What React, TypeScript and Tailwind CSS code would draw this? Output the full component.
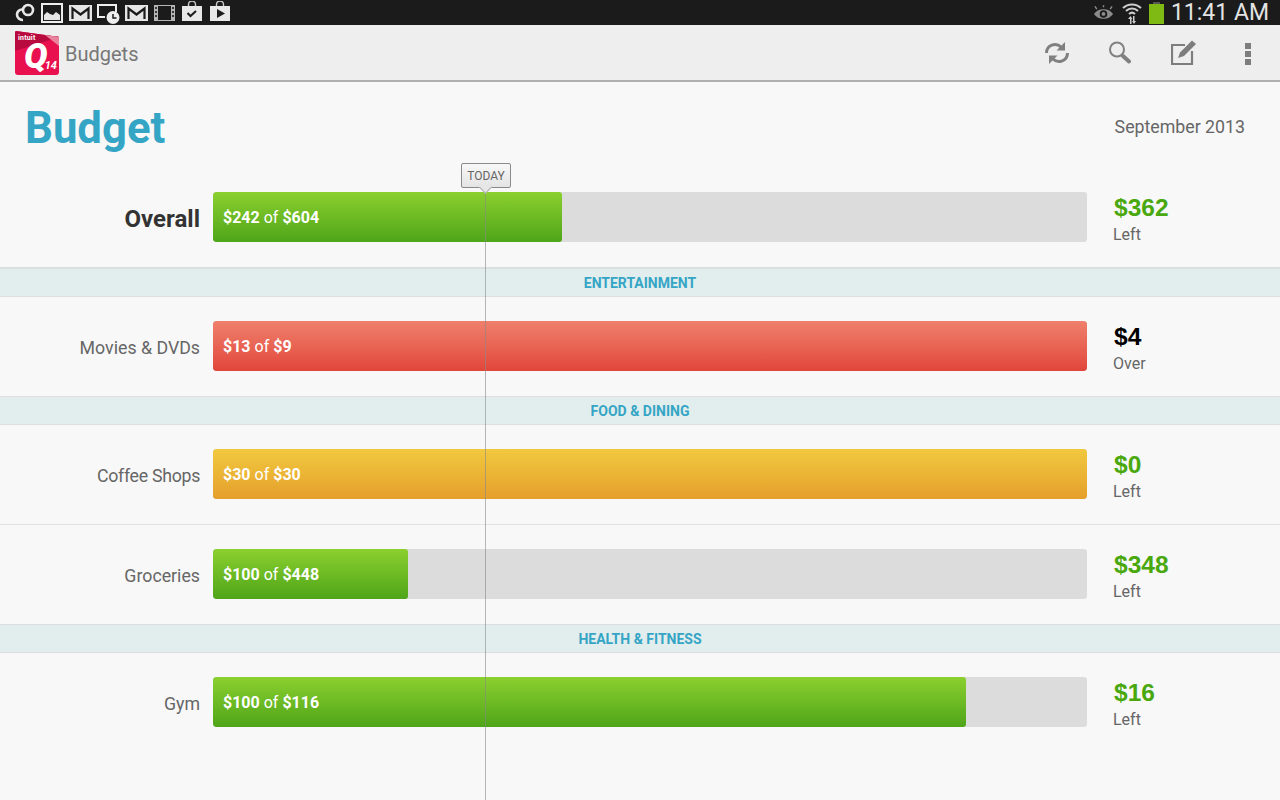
import React from "react";

const font = { fontFamily: "Roboto, sans-serif" };

const MailIcon = () => (
  <svg width="23" height="16" viewBox="0 0 23 16">
    <rect width="23" height="16" fill="#e6e6e6" />
    <path d="M3.500 14V3.500l8 6 8-6V14" fill="none" stroke="#1b1b1b" strokeWidth="2.200" />
  </svg>
);

const BagIcon = ({ children }: { children: React.ReactNode }) => (
  <svg width="20" height="20" viewBox="0 0 20 20">
    <path d="M6.500 6V3.500a3.500 3.500 0 0 1 7 0V6" fill="none" stroke="#ccc" strokeWidth="1.400" />
    <rect y="5" width="20" height="15" fill="#e8e8e8" />
    {children}
  </svg>
);

const StatusIcons = () => (
  <div className="flex items-center h-full pl-[15px]">
    <svg width="20" height="20" viewBox="0 0 20 20" fill="none" stroke="#e8e8e8" strokeWidth="2.600">
      <circle cx="13" cy="7" r="5" />
      <path d="M7 6.500A5 5 0 0 0 2 11.500 5.500 5.500 0 0 0 8 17" />
    </svg>
    <svg width="22" height="20" viewBox="0 0 22 20" className="ml-[6px]">
      <rect x="1" y="1" width="20" height="18" fill="none" stroke="#eee" strokeWidth="2" />
      <path d="M3 17v-5l3-3 3 2 3 1 3-3 4 3v5z" fill="#e6e6e6" />
    </svg>
    <div className="ml-[6px]">
      <MailIcon />
    </div>
    <svg width="23" height="22" viewBox="0 0 23 22" className="ml-[5px] mt-[2px]">
      <path d="M8 14H1V2h18v7" fill="none" stroke="#eee" strokeWidth="2" />
      <circle cx="16" cy="14.500" r="6.500" fill="#eee" />
      <path d="M16 11v4h3.500" fill="none" stroke="#1b1b1b" strokeWidth="1.500" />
    </svg>
    <div className="ml-[5px]">
      <MailIcon />
    </div>
    <svg width="21" height="16" viewBox="0 0 21 16" className="ml-[6px]">
      <rect width="21" height="16" fill="#b5b5b5" />
      <rect x="4" y="1" width="13" height="14" fill="#1b1b1b" />
      <path d="M2 2v12M19 2v12" stroke="#1b1b1b" strokeWidth="1.600" strokeDasharray="2 2" />
    </svg>
    <div className="ml-[7px] -mt-[4px]">
      <BagIcon>
        <path d="M5.500 12l3 3 5.500-5" fill="none" stroke="#1b1b1b" strokeWidth="2" />
      </BagIcon>
    </div>
    <div className="ml-[8px] -mt-[4px]">
      <BagIcon>
        <path d="M7 8l8 4.500-8 4.500z" fill="#1b1b1b" />
      </BagIcon>
    </div>
  </div>
);

const StatusRight = () => (
  <div className="flex items-center h-full pr-[11px]">
    <svg width="21" height="16" viewBox="0 0 22 16" className="mr-[8px]">
      <path d="M1 9c3-4 6-5 10-5s7 1 10 5c-3 4-6 5-10 5S4 13 1 9z" fill="#8c8c8c" />
      <circle cx="11" cy="9" r="4" fill="#1b1b1b" />
      <circle cx="11" cy="9" r="2" fill="#8c8c8c" />
      <path d="M4 4L2 1M11 2V0M18 4l2-3" stroke="#8c8c8c" strokeWidth="1.500" />
    </svg>
    <svg width="20" height="22" viewBox="0 0 20 22" fill="none" className="mr-[7px]">
      <path d="M1 6a13 13 0 0 1 18 0" stroke="#ccc" strokeWidth="2" />
      <path d="M4 9a8.500 8.500 0 0 1 12 0" stroke="#ccc" strokeWidth="2" />
      <path d="M7 12a4.500 4.500 0 0 1 6 0" stroke="#ccc" strokeWidth="2" />
      <path d="M8 22v-5H6l2.500-3 2 3H9.500v5zM11 14h1.500v5H14l-2 3-2-3h1z" fill="#ccc" />
    </svg>
    <div className="flex flex-col items-center mr-[7px]">
      <div className="w-[7px] h-[2px] bg-[#555]" />
      <div className="w-[15px] h-[20px] bg-[#7fb914]" />
    </div>
    <span className="text-[23px] leading-none text-[#e4e4e4]">11:41 AM</span>
  </div>
);

const ActionIcons = () => (
  <div className="flex items-center h-full">
    <svg width="24" height="24" viewBox="0 0 24 24" className="mr-[39px]" fill="none" stroke="#808080" strokeWidth="3">
      <path d="M1.500 12A8.500 8.500 0 0 1 16 6" />
      <path d="M22.500 12A8.500 8.500 0 0 1 8 18" />
      <path d="M20 1v8.500h-8.500z" fill="#808080" stroke="none" />
      <path d="M4 23v-8.500h8.500z" fill="#808080" stroke="none" />
    </svg>
    <svg width="23" height="23" viewBox="0 0 23 23" className="mr-[40px]" fill="none" stroke="#808080">
      <circle cx="9" cy="8.500" r="7" strokeWidth="2" />
      <path d="M15 15l6 5.500" strokeWidth="4" strokeLinecap="round" />
    </svg>
    <svg width="25" height="25" viewBox="0 0 25 25" className="mr-[49px]" fill="none" stroke="#7d7d7d">
      <path d="M14 5H1v19h20V11" strokeWidth="2.200" />
      <path d="M7 18l2-5.500L21 .500 25 4 13 16z" fill="#7d7d7d" stroke="none" />
    </svg>
    <div className="flex flex-col gap-[2px] mr-[29px] mt-[3px]">
      <div className="w-[6px] h-[6px] bg-[#7d7d7d]" />
      <div className="w-[6px] h-[6px] bg-[#7d7d7d]" />
      <div className="w-[6px] h-[6px] bg-[#7d7d7d]" />
    </div>
  </div>
);

const Logo = () => (
  <div className="relative w-[44px] h-[44px] ml-[15px]">
    <svg width="44" height="44" viewBox="0 0 44 44" className="absolute inset-0">
      <path d="M1 0l40 5.500a3 3 0 0 1 3 3V41a3 3 0 0 1-3 3H3a3 3 0 0 1-3-3V1z" fill="#e8104f" />
      <path d="M1 0l40 5.500a3 3 0 0 1 3 .500L0 20V1z" fill="#b80a3e" />
      <path d="M30 4l11 1.500a3 3 0 0 1 3 3V15z" fill="#e9839d" />
    </svg>
    <span className="absolute left-[3px] top-[3px] text-[7px] font-bold leading-[8px] tracking-[0.2px] text-white">intuit</span>
    <span className="absolute left-[9px] top-[12px] text-[35px] font-black italic leading-[27px] text-white">Q</span>
    <span className="absolute right-[2px] bottom-[4px] text-[11px] font-bold italic leading-none text-white">14</span>
  </div>
);

type BarProps = {
  label: string;
  spent: string;
  total: string;
  pct: number;
  color: string;
  amount: string;
  note: string;
  amountColor: string;
  bold?: boolean;
  labelClass?: string;
};

const Row = ({ label, spent, total, pct, color, amount, note, amountColor, bold, labelClass }: BarProps) => (
  <div className="flex items-center h-full">
    <div
      className={
        bold
          ? "w-[200px] text-right text-[24px] font-bold text-[#333] pt-[4px]"
          : `w-[200px] text-right text-[17.75px] text-[#666] pt-[5px] ${labelClass ?? ""}`
      }
    >
      {label}
    </div>
    <div className="ml-[13px] w-[874px] h-[50px] bg-[#dcdcdc] rounded-[3px] overflow-hidden">
      <div
        className={`h-full rounded-[3px] flex items-center pl-[10px] pt-[2px] text-[16px] text-white ${color}`}
        style={{ width: `${pct}%` }}
      >
        <b className="font-bold">{spent}</b>
        <span className="mx-[4px]">of</span>
        <b className="font-bold">{total}</b>
      </div>
    </div>
    <div className="ml-[26px] flex flex-col pt-[6px]">
      <span className={`ml-[1px] font-['Liberation_Sans'] text-[24.5px] leading-[30px] font-bold ${amountColor}`}>{amount}</span>
      <span className="text-[16px] leading-[24px] text-[#666]">{note}</span>
    </div>
  </div>
);

const Section = ({ title, first }: { title: string; first?: boolean }) => (
  <div
    className={`${first ? "h-[30px] border-t-2" : "h-[29px] border-t"} border-b border-[#dcdfdf] bg-[#e2eeee] pt-[2px] flex items-center justify-center text-[14px] font-bold text-[#35a5c5]`}
  >
    {title}
  </div>
);

const green = "bg-gradient-to-b from-[#8bd02f] to-[#4ea519]";
const red = "bg-gradient-to-b from-[#ef7f6c] to-[#e1453a]";
const orange = "bg-gradient-to-b from-[#f1c93f] to-[#e59f2b]";
const leftColor = "text-[#4aa80f]";

export default function App() {
  return (
    <div className="relative w-[1280px] h-[800px] overflow-hidden bg-[#f8f8f8] flex flex-col" style={font}>
      <div className="h-[25px] bg-[#1b1b1b] flex items-center justify-between">
        <StatusIcons />
        <StatusRight />
      </div>
      <div className="h-[57px] bg-[#eeeeee] border-b-2 border-[#b0b0b0] flex items-center justify-between">
        <div className="flex items-center">
          <Logo />
          <span className="ml-[6px] mt-[2px] text-[20px] text-[#777]">Budgets</span>
        </div>
        <ActionIcons />
      </div>

      <div className="h-[70px] flex items-center justify-between pl-[25px] pr-[35px] shrink-0">
        <h1 className="text-[43.7px] font-bold text-[#35a5c5] leading-none pt-[24px]">Budget</h1>
        <span className="text-[17.75px] text-[#666] pt-[21px]">September 2013</span>
      </div>
      <div className="h-[115px] pt-[15px]">
        <Row label="Overall" spent="$242" total="$604" pct={39.9} color={green} amount="$362" note="Left" amountColor={leftColor} bold />
      </div>
      <Section title="ENTERTAINMENT" first />
      <div className="h-[99px] pb-[1px]">
        <Row label="Movies & DVDs" spent="$13" total="$9" pct={100} color={red} amount="$4" note="Over" amountColor="text-black" />
      </div>
      <Section title="FOOD & DINING" />
      <div className="h-[100px] pb-[1px] border-b border-[#e2e2e2]">
        <Row label="Coffee Shops" spent="$30" total="$30" pct={100} color={orange} amount="$0" note="Left" amountColor={leftColor} labelClass="tracking-[-0.3px]" />
      </div>
      <div className="h-[99px] pb-[1px]">
        <Row label="Groceries" spent="$100" total="$448" pct={22.3} color={green} amount="$348" note="Left" amountColor={leftColor} />
      </div>
      <Section title="HEALTH & FITNESS" />
      <div className="h-[99px] pb-[1px]">
        <Row label="Gym" spent="$100" total="$116" pct={86.2} color={green} amount="$16" note="Left" amountColor={leftColor} />
      </div>

      {/* today marker sits over the rows */}
      <div className="absolute left-[485px] top-[188px] bottom-0 w-px bg-[#888]/60" />
      <div className="absolute left-[461px] top-[163px] w-[50px] h-[25px] rounded-[2px] border border-[#8a8a8a] bg-gradient-to-b from-[#f8f8f8] to-[#e4e4e4] flex items-center justify-center text-[12px] text-[#666]">
        TODAY
        <div className="absolute left-[19px] -bottom-[5px] w-[9px] h-[9px] rotate-45 bg-[#e6e6e6] border-r border-b border-[#aaa]" />
      </div>
    </div>
  );
}
